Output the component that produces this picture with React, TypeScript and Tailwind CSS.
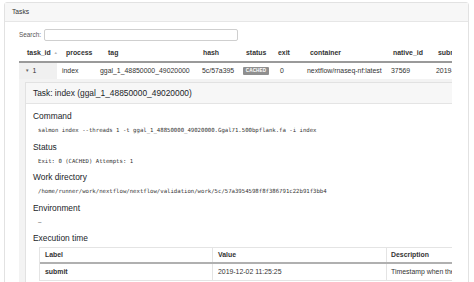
import React from 'react';

const mono = { fontFamily: '"DejaVu Sans Mono", "Liberation Mono", monospace' };

const Section = ({ title, children }: { title: string; children: React.ReactNode }) => (
  <div className="h-[30.5px]">
    <div className="h-[10px] text-[8.4px] leading-[10px] text-[#212529]">{title}</div>
    <div className="mt-[5px] h-[8px] pl-[5px] text-[5.65px] leading-[8px] whitespace-nowrap text-[#333]" style={mono}>
      {children}
    </div>
  </div>
);

export default function App() {
  return (
    <div className="w-[474px] h-[282px] overflow-hidden bg-white text-[#333] font-['Liberation_Sans',Arial,sans-serif]">
      <div className="ml-[4px] mt-[2px] w-[465px] h-[300px] border border-[#e2e2e2] rounded-t-[3px]">
        <div className="h-[19px] bg-[#f7f7f7] border-b border-[#e6e6e6] pl-[7px] text-[6.7px] leading-[18px] text-[#333]">
          Tasks
        </div>

        <div className="pl-[14px] pt-[7px]">
          <div className="flex items-center h-[12px]">
            <span className="text-[6.4px] text-[#555] w-[25px]">Search:</span>
            <div className="w-[194px] h-[12px] border border-[#cfcfcf] rounded-[2px] bg-white" />
          </div>

          <div className="mt-[4px] w-[433px] overflow-hidden">
            {/* header row */}
            <div className="flex h-[18px] items-center border-b-2 border-[#9a9a9a] text-[6.9px] font-bold text-[#333] whitespace-nowrap">
              <div className="w-[38px] shrink-0 pl-[8px] flex items-center">
                task_id<span className="ml-[3px] text-[4px] text-[#b5b5b5]">▲</span>
              </div>
              <div className="w-[40px] shrink-0 pl-[9px]">process</div>
              <div className="w-[101px] shrink-0 pl-[11px]">tag</div>
              <div className="w-[40px] shrink-0 pl-[5px]">hash</div>
              <div className="w-[36px] shrink-0 pl-[8px]">status</div>
              <div className="w-[26px] shrink-0 pl-[4px]">exit</div>
              <div className="w-[84px] shrink-0 pl-[10px]">container</div>
              <div className="w-[46px] shrink-0 pl-[9px]">native_id</div>
              <div className="w-[60px] shrink-0 pl-[8px]">submit</div>
            </div>

            {/* data row */}
            <div className="flex h-[16px] items-center text-[6.9px] text-[#333] whitespace-nowrap">
              <div className="w-[38px] h-full shrink-0 pl-[6px] flex items-center bg-[#f0f0f0]">
                <span className="text-[4.5px] text-[#666]">▼</span>
                <span className="ml-[3px]">1</span>
              </div>
              <div className="w-[40px] shrink-0 pl-[5px]">index</div>
              <div className="w-[101px] shrink-0 pl-[3px]">ggal_1_48850000_49020000</div>
              <div className="w-[40px] shrink-0 pl-[4px]">5c/57a395</div>
              <div className="w-[36px] shrink-0 pl-[5px] flex">
                <span className="h-[8px] w-[26px] rounded-[1px] bg-[#8f8f8f] text-white text-[4.6px] font-bold leading-[8px] text-center tracking-[0.1px]">
                  CACHED
                </span>
              </div>
              <div className="w-[26px] shrink-0 pl-[6px]">0</div>
              <div className="w-[84px] shrink-0 pl-[7px]">nextflow/rnaseq-nf:latest</div>
              <div className="w-[46px] shrink-0 pl-[7px]">37569</div>
              <div className="w-[60px] shrink-0 pl-[6px]">2019-12-02</div>
            </div>

            {/* expanded detail */}
            <div className="w-[520px] bg-[#f3f3f3] pl-[6px] pt-[3px] h-[210px]">
              <div className="w-[500px] border border-[#e2e2e2] bg-white h-[210px]">
                <div className="h-[21px] bg-[#f7f7f7] border-b border-[#e4e4e4] pl-[7px] text-[8.4px] leading-[21px] text-[#212529]">
                  Task: index (ggal_1_48850000_49020000)
                </div>
                <div className="pl-[7px] pt-[7px]">
                  <Section title="Command">
                    salmon index --threads 1 -t ggal_1_48850000_49020000.Ggal71.500bpflank.fa -i index
                  </Section>
                  <Section title="Status">Exit: 0 (CACHED) Attempts: 1</Section>
                  <Section title="Work directory">
                    /home/runner/work/nextflow/nextflow/validation/work/5c/57a3954598f8f386791c22b91f3bb4
                  </Section>
                  <Section title="Environment">–</Section>

                  <div className="h-[10px] text-[8.4px] leading-[10px] text-[#212529]">Execution time</div>
                  <div className="mt-[4px] ml-[6px] w-[480px] border-t border-l border-[#e4e4e4] text-[6.9px] text-[#333] whitespace-nowrap">
                    <div className="flex h-[16px] items-center font-bold border-b-2 border-[#b0b0b0]">
                      <div className="w-[173px] h-full shrink-0 pl-[5px] flex items-center border-r border-[#e4e4e4]">Label</div>
                      <div className="w-[174px] h-full shrink-0 pl-[5px] flex items-center border-r border-[#e4e4e4]">Value</div>
                      <div className="pl-[4px]">Description</div>
                    </div>
                    <div className="flex h-[17px] items-center border-b border-[#e4e4e4]">
                      <div className="w-[173px] h-full shrink-0 pl-[5px] flex items-center font-bold border-r border-[#e4e4e4]">submit</div>
                      <div className="w-[174px] h-full shrink-0 pl-[5px] flex items-center border-r border-[#e4e4e4]">2019-12-02 11:25:25</div>
                      <div className="pl-[4px]">Timestamp when the task was submitted</div>
                    </div>
                  </div>
                </div>
              </div>
            </div>
          </div>
        </div>
      </div>
    </div>
  );
}
